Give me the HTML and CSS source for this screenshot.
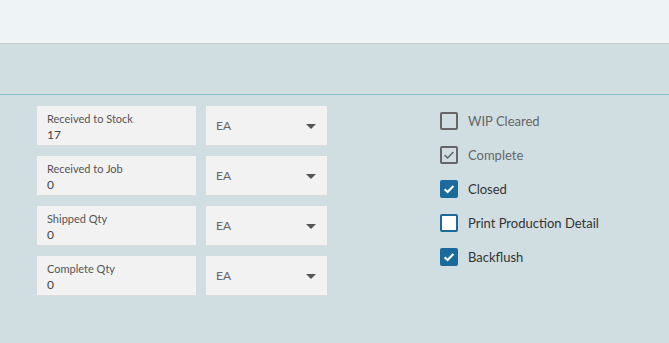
FILE: index.html
```html
<!DOCTYPE html>
<html lang="en">
<head>
  <meta charset="UTF-8">
  <title>Job Closing</title>
  <link rel="stylesheet" href="styles.css">
</head>
<body>
  <!-- Top toolbar -->
  <div class="topbar"></div>

  <!-- Section header area -->
  <div class="band"></div>

  <div class="content">
    <!-- Quantity fields -->
    <div class="fields">
      <div class="row">
        <div class="field">
          <span class="field-label">Received to Stock</span>
          <span class="field-value">17</span>
        </div>
        <div class="select">
          <span>EA</span>
          <span class="arrow"></span>
        </div>
      </div>
      <div class="row">
        <div class="field">
          <span class="field-label">Received to Job</span>
          <span class="field-value">0</span>
        </div>
        <div class="select">
          <span>EA</span>
          <span class="arrow"></span>
        </div>
      </div>
      <div class="row">
        <div class="field">
          <span class="field-label">Shipped Qty</span>
          <span class="field-value">0</span>
        </div>
        <div class="select">
          <span>EA</span>
          <span class="arrow"></span>
        </div>
      </div>
      <div class="row">
        <div class="field">
          <span class="field-label">Complete Qty</span>
          <span class="field-value">0</span>
        </div>
        <div class="select">
          <span>EA</span>
          <span class="arrow"></span>
        </div>
      </div>
    </div>

    <!-- Flags -->
    <div class="checks">
      <label class="check disabled"><span class="box"></span>WIP Cleared</label>
      <label class="check disabled checked"><span class="box"><svg viewBox="0 0 14 14"><path d="M2.6 7.2 L5.6 10 L11.4 4" /></svg></span>Complete</label>
      <label class="check checked"><span class="box"><svg viewBox="0 0 14 14"><path d="M2.6 7.2 L5.6 10 L11.4 4" /></svg></span>Closed</label>
      <label class="check"><span class="box"></span>Print Production Detail</label>
      <label class="check checked"><span class="box"><svg viewBox="0 0 14 14"><path d="M2.6 7.2 L5.6 10 L11.4 4" /></svg></span>Backflush</label>
    </div>
  </div>
</body>
</html>
```

FILE: styles.css
```css
body {
  margin: 0;
  font-family: Lato, "Open Sans", sans-serif;
  background-color: #d0dee2;
  color: #333;
  height: 343px;
  overflow: hidden;
}

.topbar {
  height: 43px;
  background-color: #eef3f5;
  border-bottom: 1px solid #c6cbcc;
}

.band {
  height: 50px;
  border-bottom: 1px solid #8bbccb;
}

.content {
  display: flex;
  padding: 11px 0 0 37px;
}

.fields {
  display: flex;
  flex-direction: column;
  gap: 10px;
  width: 290px;
}

.row {
  display: flex;
  gap: 10px;
}

.field,
.select {
  height: 40px;
  box-sizing: border-box;
  background-color: #f2f2f2;
  border-bottom: 1px solid #dcdcdc;
}

.field {
  width: 159px;
  display: flex;
  flex-direction: column;
  padding: 6px 0 0 10px;
}

.field-label {
  font-size: 11px;
  color: #555;
  line-height: 14px;
}

.field-value {
  font-size: 12px;
  color: #444;
  line-height: 18px;
}

.select {
  width: 121px;
  display: flex;
  align-items: center;
  justify-content: space-between;
  padding: 0 11px 0 10px;
  font-size: 12px;
  color: #666;
}

.arrow {
  width: 0;
  height: 0;
  border-left: 5px solid transparent;
  border-right: 5px solid transparent;
  border-top: 5px solid #555;
  margin-top: 2px;
}

.checks {
  margin-left: 113px;
  padding-top: 6px;
  display: flex;
  flex-direction: column;
  gap: 16px;
}

.check {
  display: flex;
  align-items: center;
  height: 18px;
  font-size: 13px;
  color: #333;
}

.check.disabled {
  color: #666;
}

.box {
  width: 18px;
  height: 18px;
  box-sizing: border-box;
  border: 2px solid #1a6a9c;
  border-radius: 2px;
  background-color: white;
  margin-right: 10px;
  display: flex;
  align-items: center;
  justify-content: center;
}

.box svg {
  width: 14px;
  height: 14px;
  fill: none;
  stroke: white;
  stroke-width: 2.2;
}

.check.checked .box {
  background-color: #1a6a9c;
}

.check.disabled .box {
  border-color: #666;
  background-color: transparent;
}

.check.disabled .box svg {
  stroke: #666;
  stroke-width: 1.6;
}
```
